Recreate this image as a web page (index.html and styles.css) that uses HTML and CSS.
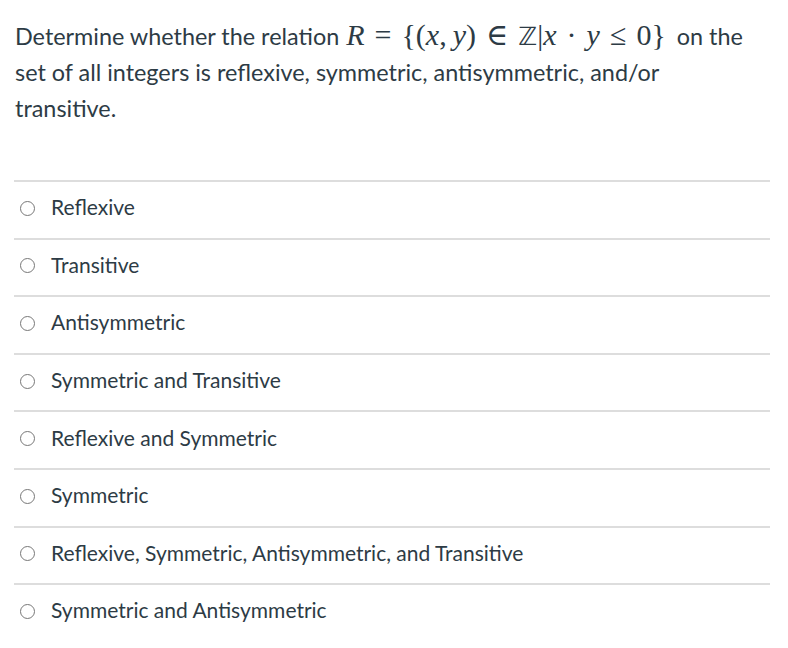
FILE: index.html
```html
<!DOCTYPE html>
<html>
<head>
<meta charset="utf-8">
<link rel="stylesheet" href="styles.css">
</head>
<body>
<div class="question">
  <p class="prompt">Determine whether the relation <span class="math"><span class="mi">R</span><span class="rel">=</span><span class="mo">{(</span><span class="mi">x</span><span class="mo punct">,</span><span class="mi">y</span><span class="mo">)</span><span class="rel">∈</span><span class="bb">ℤ</span><span class="mo">|</span><span class="mi">x</span><span class="bin">·</span><span class="mi">y</span><span class="rel">≤</span><span class="mo">0}</span></span> on the set of all integers is reflexive, symmetric, antisymmetric, and/or transitive.</p>
  <ul class="answers">
    <li class="answer"><span class="radio"></span><span class="label">Reflexive</span></li>
    <li class="answer"><span class="radio"></span><span class="label">Transitive</span></li>
    <li class="answer"><span class="radio"></span><span class="label">Antisymmetric</span></li>
    <li class="answer"><span class="radio"></span><span class="label">Symmetric and Transitive</span></li>
    <li class="answer"><span class="radio"></span><span class="label">Reflexive and Symmetric</span></li>
    <li class="answer"><span class="radio"></span><span class="label">Symmetric</span></li>
    <li class="answer"><span class="radio"></span><span class="label">Reflexive, Symmetric, Antisymmetric, and Transitive</span></li>
    <li class="answer"><span class="radio"></span><span class="label">Symmetric and Antisymmetric</span></li>
  </ul>
</div>
</body>
</html>
```
FILE: styles.css
```css
html, body {
  margin: 0;
  padding: 0;
  background: #ffffff;
}
body {
  font-family: Lato, "Open Sans", sans-serif;
  color: #2d3b45;
}
.question {
  padding: 18px 18px 0 14px;
}
.prompt {
  margin: 0 26px 0 1px;
  font-size: 23.4px;
  line-height: 36px;
}
.math {
  font-family: "Liberation Serif", "DejaVu Serif", serif;
  font-size: 30px;
  line-height: 0;
  color: #2d3b45;
  margin: 0 5px 0 1px;
}
.mi {
  font-style: italic;
}
.punct {
  margin-right: 6px;
}
.rel {
  margin: 0 10px;
}
.bin {
  margin: 0 10px;
}
.bb {
  font-family: "DejaVu Sans", sans-serif;
  font-size: 0.85em;
}
.answers {
  list-style: none;
  margin: 54px 0 0 0;
  padding: 0;
}
.answer {
  display: flex;
  align-items: center;
  gap: 16px;
  height: 55.6px;
  border-top: 2px solid #dddddd;
  padding: 0 0 0 6px;
  font-size: 21px;
}
.radio {
  box-sizing: border-box;
  width: 15px;
  height: 15px;
  border: 1.3px solid #777777;
  border-radius: 50%;
  flex: none;
  margin-top: -3px;
}
.label {
  margin-top: -6px;
}
```
